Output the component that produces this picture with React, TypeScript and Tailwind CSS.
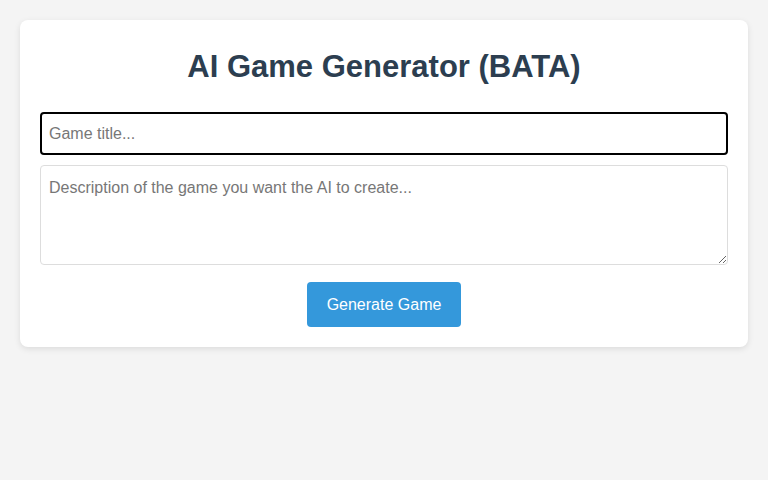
export default function App() {
  return (
    <div className="min-h-screen bg-[#f4f4f4] p-5 font-['Liberation_Sans',Arial,sans-serif]">
      <div className="rounded-lg bg-white p-5 shadow-[0_2px_6px_rgba(0,0,0,0.1)]">
        <h1 className="mb-[27px] mt-2 text-center text-[31px] font-bold leading-[37px] text-[#2c3e50]">
          AI Game Generator (BATA)
        </h1>
        <div className="flex flex-col gap-[10px]">
          <input
            type="text"
            placeholder="Game title..."
            className="h-[43px] w-full rounded border-2 border-black px-[7px] text-base text-[#333] outline-none placeholder:text-[#777]"
          />
          <textarea
            placeholder="Description of the game you want the AI to create..."
            className="h-[100px] w-full resize-y rounded border border-[#ddd] px-2 py-[10px] text-base text-[#333] outline-none placeholder:text-[#777]"
          />
        </div>
        <div className="mt-[17px] flex justify-center">
          <button
            type="button"
            className="h-[45px] rounded bg-[#3498db] px-5 text-base text-white hover:bg-[#2980b9]"
          >
            Generate Game
          </button>
        </div>
      </div>
    </div>
  );
}
